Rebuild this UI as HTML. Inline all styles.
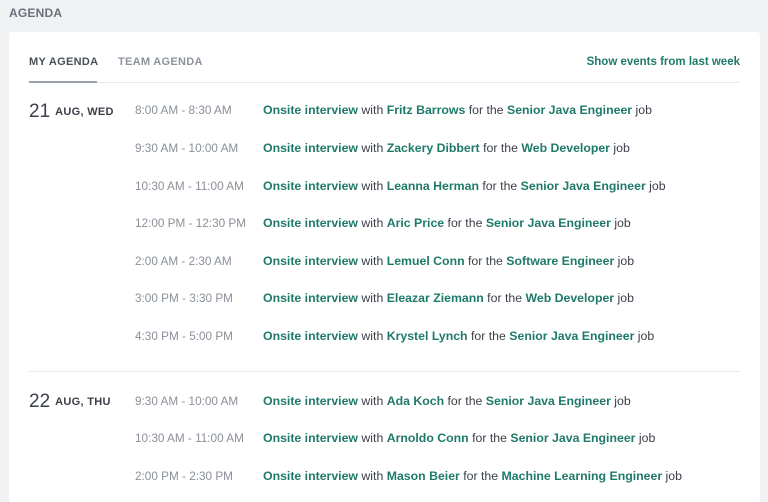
<!DOCTYPE html>
<html><head><style>
body{margin:0;width:768px;height:491px;background:#f0f1f3;font-family:"Liberation Sans",sans-serif;overflow:hidden;position:relative;color:#3a3f47}
.h{position:absolute;left:9px;top:6px;font-size:12px;font-weight:bold;color:#6b717a;letter-spacing:.2px}
.card{position:absolute;left:9px;top:32px;width:751px;height:470px;background:#fff;border-radius:3px}
.tabs{position:absolute;left:20px;right:20px;top:0;height:50px;border-bottom:1px solid #e6e8eb}
.tab{position:absolute;top:24px;font-size:11px;font-weight:bold;letter-spacing:.3px;white-space:nowrap}
.t1{left:0;color:#4a4f57;padding-bottom:12px;border-bottom:2px solid #9aa0a8;width:68px;height:13px}
.t2{left:89px;color:#8d939b}
.sh{position:absolute;right:0;top:24px;font-size:11.5px;font-weight:bold;color:#1f7a6a;white-space:nowrap}
.row{position:absolute;font-size:12.3px;white-space:nowrap;height:16px}
.tm{position:absolute;left:126px;top:1px;color:#8a9098;font-size:11.75px}
.ev{position:absolute;left:254px;top:0;color:#3a3f47}
.g{color:#1f7a6a;font-weight:bold}
.day{position:absolute;left:20px;font-size:19px;color:#3a3f47;white-space:nowrap}
.day small{font-size:11px;font-weight:bold;letter-spacing:.3px;margin-left:5px;vertical-align:2px}
.div{position:absolute;left:20px;right:20px;top:339px;border-top:1px solid #e6e8eb}
</style></head><body>
<div class="h">AGENDA</div>
<div class="card">
<div class="tabs"><div class="tab t1">MY AGENDA</div><div class="tab t2">TEAM AGENDA</div><div class="sh">Show events from last week</div></div>
<div class="day" style="top:69px">21<small>AUG, WED</small></div>
<div class="row" style="top:71px"><span class="tm">8:00 AM - 8:30 AM</span><span class="ev"><span class="g">Onsite interview</span> with <span class="g">Fritz Barrows</span> for the <span class="g">Senior Java Engineer</span> job</span></div>
<div class="row" style="top:109px"><span class="tm">9:30 AM - 10:00 AM</span><span class="ev"><span class="g">Onsite interview</span> with <span class="g">Zackery Dibbert</span> for the <span class="g">Web Developer</span> job</span></div>
<div class="row" style="top:147px"><span class="tm">10:30 AM - 11:00 AM</span><span class="ev"><span class="g">Onsite interview</span> with <span class="g">Leanna Herman</span> for the <span class="g">Senior Java Engineer</span> job</span></div>
<div class="row" style="top:184px"><span class="tm">12:00 PM - 12:30 PM</span><span class="ev"><span class="g">Onsite interview</span> with <span class="g">Aric Price</span> for the <span class="g">Senior Java Engineer</span> job</span></div>
<div class="row" style="top:222px"><span class="tm">2:00 AM - 2:30 AM</span><span class="ev"><span class="g">Onsite interview</span> with <span class="g">Lemuel Conn</span> for the <span class="g">Software Engineer</span> job</span></div>
<div class="row" style="top:259px"><span class="tm">3:00 PM - 3:30 PM</span><span class="ev"><span class="g">Onsite interview</span> with <span class="g">Eleazar Ziemann</span> for the <span class="g">Web Developer</span> job</span></div>
<div class="row" style="top:297px"><span class="tm">4:30 PM - 5:00 PM</span><span class="ev"><span class="g">Onsite interview</span> with <span class="g">Krystel Lynch</span> for the <span class="g">Senior Java Engineer</span> job</span></div>
<div class="div"></div>
<div class="day" style="top:359px">22<small>AUG, THU</small></div>
<div class="row" style="top:362px"><span class="tm">9:30 AM - 10:00 AM</span><span class="ev"><span class="g">Onsite interview</span> with <span class="g">Ada Koch</span> for the <span class="g">Senior Java Engineer</span> job</span></div>
<div class="row" style="top:399px"><span class="tm">10:30 AM - 11:00 AM</span><span class="ev"><span class="g">Onsite interview</span> with <span class="g">Arnoldo Conn</span> for the <span class="g">Senior Java Engineer</span> job</span></div>
<div class="row" style="top:437px"><span class="tm">2:00 PM - 2:30 PM</span><span class="ev"><span class="g">Onsite interview</span> with <span class="g">Mason Beier</span> for the <span class="g">Machine Learning Engineer</span> job</span></div>
</div>
</body></html>
